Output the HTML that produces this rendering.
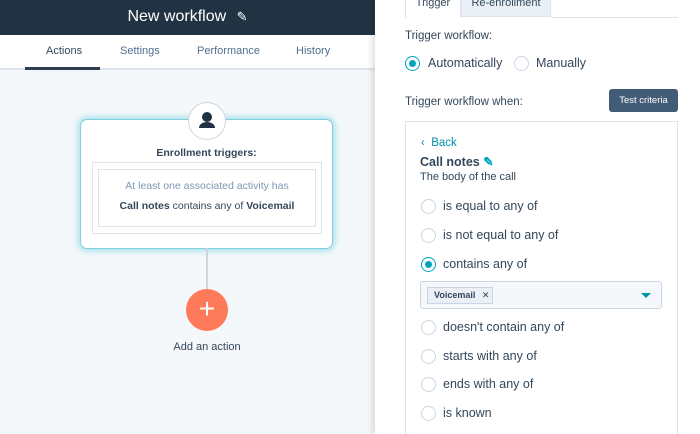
<!DOCTYPE html>
<html><head><style>
*{box-sizing:border-box;margin:0;padding:0}
html,body{width:700px;height:434px;overflow:hidden}
body{position:relative;background:#f5f8fa;font-family:"Liberation Sans",sans-serif;color:#33475b}
.a{position:absolute}
.hdr{left:0;top:0;width:375px;height:35px;background:#213343;color:#fff;font-size:16px;text-align:center;line-height:33px}
.tabs{left:0;top:35px;width:375px;height:35px;background:#fff;border-bottom:2px solid #dfe3eb;font-size:11px}
.tabs span{position:absolute;top:10px}
.card{left:81px;top:120px;width:251px;height:128px;background:#fff;border-radius:6px;box-shadow:0 0 0 1px #7fd0de,0 0 7px 3px #a5e0ea}
.rp{left:375px;top:0;width:325px;height:434px;background:#fff;box-shadow:-3px 0 6px rgba(0,0,0,.12);overflow:hidden}
.radio{position:absolute;width:15px;height:15px;border-radius:50%;border:1px solid #cbd6e2;background:#fff}
.lbl{position:absolute;font-size:12.5px;color:#33475b;white-space:nowrap}
.on{border-color:#00a4bd}
.on::after{content:"";position:absolute;left:3px;top:3px;width:7px;height:7px;border-radius:50%;background:#00a4bd}
</style></head><body>
<div class="a hdr">New workflow <span style="font-size:13px;margin-left:6px">✎</span></div>
<div class="a tabs">
<span style="left:46px;color:#33475b">Actions</span>
<span style="left:120px;color:#516f90">Settings</span>
<span style="left:197px;color:#516f90">Performance</span>
<span style="left:296px;color:#516f90">History</span>
<div class="a" style="left:25px;top:32px;width:75px;height:3px;background:#2d3e50"></div>
</div>
<div class="a card">
<div class="a" style="left:18px;top:27px;width:215px;height:18px;text-align:center;font-size:10.5px;font-weight:bold">Enrollment triggers:</div>
<div class="a" style="left:11px;top:42px;width:230px;height:72px;border:1px solid #dfe3eb">
<div class="a" style="left:5px;top:6px;width:218px;height:58px;border:1px solid #dfe3eb;text-align:center;font-size:10.5px">
<div style="color:#7c98b6;margin-top:10px">At least one associated activity has</div>
<div style="margin-top:8px"><b>Call notes</b> contains any of <b>Voicemail</b></div>
</div></div>
</div>
<div class="a" style="left:188px;top:102px;width:38px;height:38px;border-radius:50%;background:#fff;border:1px solid #cbd6e2">
<svg width="36" height="36" viewBox="0 0 36 36"><circle cx="18" cy="14" r="5" fill="#213343"/><path d="M10 25c0-4 4-6 8-6s8 2 8 6z" fill="#213343"/></svg></div>
<div class="a" style="left:206px;top:248px;width:2px;height:42px;background:#cbd6e2"></div>
<div class="a" style="left:186px;top:289px;width:42px;height:42px;border-radius:50%;background:#ff7a59;color:#fff;font-size:28px;text-align:center;line-height:40px">+</div>
<div class="a" style="left:150px;top:341px;width:114px;text-align:center;font-size:11px">Add an action</div>

<div class="a rp">
<div class="a" style="left:30px;top:-2px;width:56px;height:20px;border:1px solid #dfe3eb;border-bottom:none;background:#fff;font-size:11px;text-align:center;line-height:8px">Trigger</div>
<div class="a" style="left:86px;top:-2px;width:90px;height:19px;border:1px solid #dfe3eb;background:#eaf0f6;font-size:11px;text-align:center;line-height:8px">Re-enrollment</div>
<div class="a" style="left:176px;top:17px;width:127px;height:1px;background:#dfe3eb"></div>
<div class="lbl" style="left:30px;top:30px;font-size:11.5px">Trigger workflow:</div>
<div class="radio on" style="left:30px;top:56px"></div><div class="lbl" style="left:53px;top:56px">Automatically</div>
<div class="radio" style="left:139px;top:56px"></div><div class="lbl" style="left:161px;top:56px">Manually</div>
<div class="lbl" style="left:30px;top:96px;font-size:11.5px">Trigger workflow when:</div>
<div class="a" style="left:234px;top:89px;width:69px;height:23px;background:#425b76;border-radius:3px;color:#fff;font-size:9.5px;text-align:center;line-height:23px">Test criteria</div>
<div class="a" style="left:30px;top:121px;width:273px;height:330px;border:1px solid #dfe3eb"></div>
<div class="lbl" style="left:46px;top:137px;font-size:11.5px;color:#0091ae">‹ &nbsp;Back</div>
<div class="lbl" style="left:45px;top:154px;font-weight:bold;font-size:12.5px">Call notes <span style="color:#00a4bd">✎</span></div>
<div class="lbl" style="left:45px;top:171px;font-size:11px">The body of the call</div>
<div class="radio" style="left:46px;top:199px"></div><div class="lbl" style="left:68px;top:199px">is equal to any of</div>
<div class="radio" style="left:46px;top:228px"></div><div class="lbl" style="left:68px;top:228px">is not equal to any of</div>
<div class="radio on" style="left:46px;top:257px"></div><div class="lbl" style="left:68px;top:257px">contains any of</div>
<div class="a" style="left:45px;top:281px;width:242px;height:28px;background:#f5f8fa;border:1px solid #cbd6e2;border-radius:3px">
<div class="a" style="left:6px;top:5px;width:66px;height:17px;background:#eaf0f6;border:1px solid #cbd6e2;font-size:9px;font-weight:bold;line-height:15px;padding-left:6px">Voicemail <span style="font-weight:normal;margin-left:4px">✕</span></div>
<div class="a" style="left:220px;top:11px;border-left:5px solid transparent;border-right:5px solid transparent;border-top:5px solid #0091ae"></div>
</div>
<div class="radio" style="left:46px;top:320px"></div><div class="lbl" style="left:68px;top:320px">doesn't contain any of</div>
<div class="radio" style="left:46px;top:349px"></div><div class="lbl" style="left:68px;top:349px">starts with any of</div>
<div class="radio" style="left:46px;top:377px"></div><div class="lbl" style="left:68px;top:377px">ends with any of</div>
<div class="radio" style="left:46px;top:406px"></div><div class="lbl" style="left:68px;top:406px">is known</div>
</div>
</body></html>
